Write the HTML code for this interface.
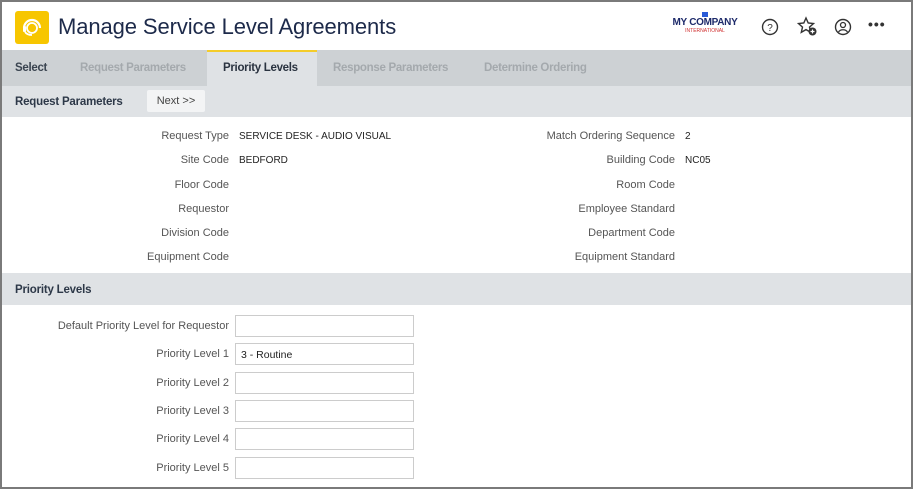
<!DOCTYPE html>
<html><head><meta charset="utf-8"><style>
*{box-sizing:border-box;margin:0;padding:0}
body{width:922px;height:498px;background:#fff;font-family:"Liberation Sans",sans-serif;position:relative;overflow:hidden}
#f{position:absolute;left:0;top:0;width:913px;height:489px;border:2px solid #7a7a7a;overflow:hidden;background:#fff}
.abs{position:absolute}
.hdr{left:0;top:0;width:911px;height:48px;background:#fff}
.logo{left:13px;top:9px;width:34px;height:33px;background:#f7c600;border-radius:3px}
.title{left:56px;top:12px;font-size:22px;color:#1d2a4a;letter-spacing:-0.1px}
.tabs{left:0;top:48px;width:911px;height:36px;background:#cdd1d4}
.tab{position:absolute;top:11px;font-size:11.5px;font-weight:bold;color:#a4a9ad;letter-spacing:-0.3px}
.act{left:205px;top:48px;width:110px;height:36px;background:#dfe2e5;border-top:2px solid #f4cc2a}
.sub{left:0;top:84px;width:911px;height:31px;background:#dfe2e5}
.lbl{position:absolute;font-size:11px;color:#555;text-align:right}
.val{position:absolute;font-size:10px;color:#222;top:0}
.inp{position:absolute;left:233px;width:179px;height:22px;border:1px solid #ccc;background:#fff;font-size:10.5px;color:#222;padding:5px 5px}
</style></head><body><div id="f">
<div class="abs hdr"></div>
<div class="abs logo"><svg width="34" height="33" viewBox="0 0 34 33"><path d="M9 17a8 8 0 0 1 16 0" fill="none" stroke="#fff" stroke-width="2.2"/><circle cx="17" cy="17" r="5" fill="none" stroke="#fff" stroke-width="1.8"/><rect x="8" y="15" width="3" height="6" rx="1" fill="#fff"/><path d="M10 21q2 3 7 3" fill="none" stroke="#fff" stroke-width="1.8"/></svg></div>
<div class="abs title">Manage Service Level Agreements</div>
<div class="abs" style="left:666px;top:10px;width:74px;text-align:center"><div style="width:6px;height:5px;background:#2a5bd7;margin:0 auto"></div><div style="font-size:10px;font-weight:bold;color:#1d2a6a;letter-spacing:-0.3px;line-height:11px">MY COMPANY</div><div style="font-size:5px;color:#d03030;line-height:6px">INTERNATIONAL</div></div>
<svg class="abs" style="left:758px;top:15px" width="20" height="20" viewBox="0 0 20 20"><circle cx="10" cy="10" r="7.5" fill="none" stroke="#333" stroke-width="1.4"/><text x="10" y="14" font-size="10" text-anchor="middle" fill="#333" font-family="Liberation Sans">?</text></svg>
<svg class="abs" style="left:795px;top:14px" width="22" height="22" viewBox="0 0 22 22"><path d="M9 2l2.2 5 5.3.5-4 3.6 1.2 5.2L9 13.6 4.3 16.3 5.5 11.1 1.5 7.5l5.3-.5z" fill="none" stroke="#333" stroke-width="1.4"/><circle cx="15.5" cy="15.5" r="4" fill="#333"/><path d="M13.5 15.5h4M15.5 13.5v4" stroke="#fff" stroke-width="1.2"/></svg>
<svg class="abs" style="left:831px;top:15px" width="20" height="20" viewBox="0 0 20 20"><circle cx="10" cy="10" r="7.5" fill="none" stroke="#333" stroke-width="1.4"/><circle cx="10" cy="8" r="2.5" fill="none" stroke="#333" stroke-width="1.3"/><path d="M5.5 15a5 4 0 0 1 9 0" fill="none" stroke="#333" stroke-width="1.3"/></svg>
<div class="abs" style="left:866px;top:14px;font-size:14px;font-weight:bold;color:#333;letter-spacing:1px">•••</div>
<div class="abs tabs"></div>
<div class="abs act"></div>
<div class="tab" style="left:13px;top:60px;color:#3a4450">Select</div>
<div class="tab" style="left:78px;top:60px">Request Parameters</div>
<div class="tab" style="left:221px;top:60px;color:#2a3340">Priority Levels</div>
<div class="tab" style="left:331px;top:60px">Response Parameters</div>
<div class="tab" style="left:482px;top:60px">Determine Ordering</div>
<div class="abs sub"></div>
<div class="abs" style="left:13px;top:94px;font-size:11.5px;font-weight:bold;color:#2d3848;letter-spacing:-0.2px">Request Parameters</div>
<div class="abs" style="left:145px;top:88px;width:58px;height:22px;background:#f3f4f5;border-radius:2px;font-size:11px;color:#444;text-align:center;line-height:22px">Next &gt;&gt;</div>
<div class="lbl" style="right:682px;top:128px">Request Type</div><div class="val" style="left:237px;top:129px">SERVICE DESK - AUDIO VISUAL</div>
<div class="lbl" style="right:682px;top:152px">Site Code</div><div class="val" style="left:237px;top:153px">BEDFORD</div>
<div class="lbl" style="right:682px;top:177px">Floor Code</div>
<div class="lbl" style="right:682px;top:201px">Requestor</div>
<div class="lbl" style="right:682px;top:225px">Division Code</div>
<div class="lbl" style="right:682px;top:249px">Equipment Code</div>
<div class="lbl" style="right:236px;top:128px">Match Ordering Sequence</div><div class="val" style="left:683px;top:129px">2</div>
<div class="lbl" style="right:236px;top:152px">Building Code</div><div class="val" style="left:683px;top:153px">NC05</div>
<div class="lbl" style="right:236px;top:177px">Room Code</div>
<div class="lbl" style="right:236px;top:201px">Employee Standard</div>
<div class="lbl" style="right:236px;top:225px">Department Code</div>
<div class="lbl" style="right:236px;top:249px">Equipment Standard</div>
<div class="abs" style="left:0;top:271px;width:911px;height:32px;background:#dfe2e5"></div>
<div class="abs" style="left:13px;top:282px;font-size:11.5px;font-weight:bold;color:#2d3848;letter-spacing:-0.2px">Priority Levels</div>
<div class="lbl" style="right:682px;top:318px">Default Priority Level for Requestor</div><div class="inp" style="top:313px"></div>
<div class="lbl" style="right:682px;top:346px">Priority Level 1</div><div class="inp" style="top:341px">3 - Routine</div>
<div class="lbl" style="right:682px;top:375px">Priority Level 2</div><div class="inp" style="top:370px"></div>
<div class="lbl" style="right:682px;top:403px">Priority Level 3</div><div class="inp" style="top:398px"></div>
<div class="lbl" style="right:682px;top:431px">Priority Level 4</div><div class="inp" style="top:426px"></div>
<div class="lbl" style="right:682px;top:460px">Priority Level 5</div><div class="inp" style="top:455px"></div>
</div></body></html>
